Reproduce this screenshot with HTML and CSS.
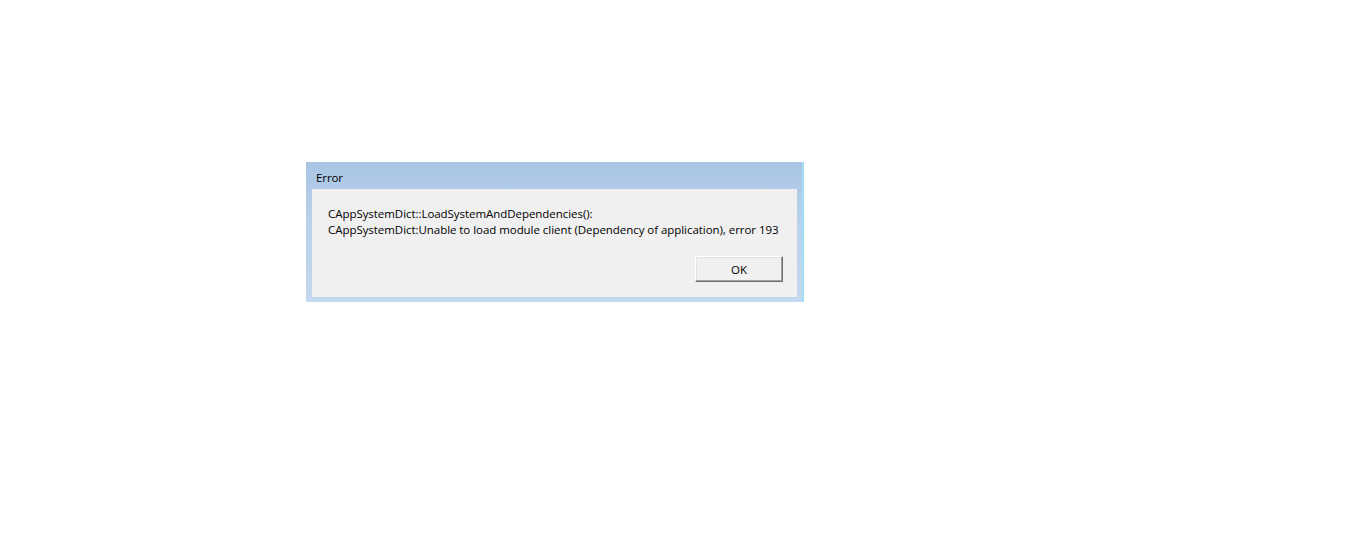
FILE: index.html
```html
<!DOCTYPE html>
<html>
<head>
<meta charset="utf-8">
<link rel="stylesheet" href="styles.css">
</head>
<body>
<div class="page">
  <div class="window">
    <div class="titlebar"><span class="title">Error</span></div>
    <div class="client">
      <div class="message">
        <div>CAppSystemDict::LoadSystemAndDependencies():</div>
        <div>CAppSystemDict:Unable to load module client (Dependency of application), error 193</div>
      </div>
      <div class="actions">
        <button class="btn">OK</button>
      </div>
    </div>
  </div>
</div>
</body>
</html>
```
FILE: styles.css
```css
html, body {
  margin: 0;
  padding: 0;
  background: #ffffff;
}
.page {
  width: 1354px;
  height: 547px;
  padding: 162px 0 0 306px;
  box-sizing: border-box;
}
.window {
  width: 498px;
  height: 140px;
  box-sizing: border-box;
  background: linear-gradient(to bottom, #a9c5e4 0%, #b9d1ea 40%, #c4d8ee 100%);
  border-right: 2px solid #9fe0f6;
  padding: 0 5px 5px 6px;
  display: flex;
  flex-direction: column;
  font-family: "Open Sans", "Noto Sans", sans-serif;
  font-size: 11.5px;
  color: #000;
}
.titlebar {
  height: 27px;
  display: flex;
  align-items: center;
  padding: 4px 0 0 4px;
  box-sizing: border-box;
}
.title {
  font-size: 11.5px;
  color: #000;
  letter-spacing: -0.1px;
}
.client {
  flex: 1;
  background: #f0f0f0;
  display: flex;
  flex-direction: column;
  padding: 17px 14px 15px 16px;
}
.message {
  line-height: 16px;
  letter-spacing: -0.05px;
  white-space: nowrap;
}
.actions {
  margin-top: auto;
  display: flex;
  justify-content: flex-end;
}
.btn {
  width: 88px;
  height: 26px;
  box-sizing: border-box;
  background: #f0f0f0;
  border: 1px solid;
  border-color: #ffffff #707070 #707070 #ffffff;
  box-shadow: inset -1px -1px 0 #a0a0a0, inset 1px 1px 0 #e3e3e3;
  font-family: "Open Sans", "Noto Sans", sans-serif;
  font-size: 11.5px;
  color: #000;
  padding: 0;
}
```
